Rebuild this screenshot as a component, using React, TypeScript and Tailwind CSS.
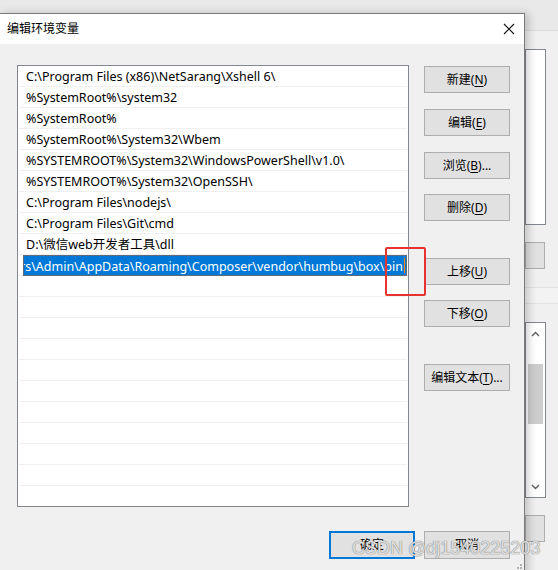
import React from 'react'

const font = { fontFamily: '"Noto Sans", "Noto Sans CJK SC", sans-serif' }

const paths = [
  'C:\\Program Files (x86)\\NetSarang\\Xshell 6\\',
  '%SystemRoot%\\system32',
  '%SystemRoot%',
  '%SystemRoot%\\System32\\Wbem',
  '%SYSTEMROOT%\\System32\\WindowsPowerShell\\v1.0\\',
  '%SYSTEMROOT%\\System32\\OpenSSH\\',
  'C:\\Program Files\\nodejs\\',
  'C:\\Program Files\\Git\\cmd',
  'D:\\微信web开发者工具\\dll',
]

const editing = 'C:\\Users\\Admin\\AppData\\Roaming\\Composer\\vendor\\humbug\\box\\bin'

function Btn({
  label,
  mn,
  tail = '',
  className = '',
}: {
  label: string
  mn: string
  tail?: string
  className?: string
}) {
  return (
    <div
      className={
        'flex h-[27px] w-[86px] items-center justify-center border border-[#adadad] bg-[#e1e1e1] text-[12px] text-black ' +
        className
      }
    >
      <span>
        {label}(<span className="underline underline-offset-2">{mn}</span>){tail}
      </span>
    </div>
  )
}

function Chevron({ up }: { up?: boolean }) {
  return (
    <svg width="9" height="6" viewBox="0 0 9 6">
      <path
        d={up ? 'M1 5L4.5 1.5L8 5' : 'M1 1L4.5 4.5L8 1'}
        fill="none"
        stroke="#606060"
        strokeWidth="1.4"
      />
    </svg>
  )
}

export default function App() {
  const emptyRows = Array.from({ length: 11 })

  return (
    <div className="relative h-[570px] w-[558px] overflow-hidden bg-[#e9e9e9]" style={font}>
      {/* window behind the dialog */}
      <div className="absolute left-[500px] top-[30px] h-[560px] w-[60px] border-t border-[#dcdcdc] bg-[#f0f0f0]">
        <div className="ml-[25px] mt-[18px] h-[176px] w-[21px] border border-[#828790] bg-white" />
        <div className="ml-[25px] mt-[17px] h-[27px] w-[20px] border border-[#adadad] bg-[#e1e1e1]" />
        <div className="mt-[18px] h-[17px] w-[60px] border-y border-[#e2e2e2] bg-[#f3f3f3]" />
        <div className="ml-[25px] mt-[18px] flex h-[176px] w-[21px] flex-col items-center border border-[#828790] bg-white">
          <div className="mt-[8px]">
            <Chevron up />
          </div>
          <div className="mt-[27px] h-[60px] w-[15px] bg-[#cdcdcd]" />
          <div className="mt-auto mb-[7px]">
            <Chevron />
          </div>
        </div>
        <div className="ml-[25px] mt-[17px] h-[27px] w-[20px] border border-[#adadad] bg-[#e1e1e1]" />
      </div>

      {/* dialog */}
      <div className="absolute left-[-1px] top-[13px] h-[600px] w-[526px] border border-[#7a7a7a] bg-[#f0f0f0] shadow-[4px_0_8px_rgba(0,0,0,0.18)]">
        <div className="flex h-[30px] items-center justify-between bg-white pl-[7px] pr-[7px]">
          <span className="text-[12px] text-black">编辑环境变量</span>
          <svg width="12" height="12" viewBox="0 0 12 12" className="mr-[2px]">
            <path d="M1 1L11 11M11 1L1 11" stroke="#111" strokeWidth="1.1" />
          </svg>
        </div>

        <div className="flex pl-[17px] pt-[21px]">
          {/* list */}
          <div className="h-[442px] w-[392px] overflow-hidden border border-[#828790] bg-white">
            {paths.map((p) => (
              <div
                key={p}
                className="mx-[1px] flex h-[21px] items-center border-b border-[#f0f0f0] pl-[7px] pt-[2px] text-[12.5px] whitespace-nowrap text-black"
              >
                {p}
              </div>
            ))}
            <div className="flex h-[21px] items-center border-b border-[#f0f0f0] pl-[5px]">
              <div className="relative flex h-[21px] w-[384px] justify-end overflow-hidden border border-[#5f6b78] bg-[#0078d7]">
                <span className="pr-[3px] pt-[1px] text-[12.5px] leading-[19px] whitespace-nowrap text-white">
                  {editing}
                </span>
                <span className="absolute right-[1px] top-[2px] h-[15px] w-[1px] bg-[#ff8c00]" />
              </div>
            </div>
            {emptyRows.map((_, i) => (
              <div key={i} className="mx-[1px] h-[21px] border-b border-[#f0f0f0]" />
            ))}
          </div>

          {/* side buttons */}
          <div className="ml-[15px] flex flex-col pt-[1px]">
            <Btn label="新建" mn="N" />
            <Btn label="编辑" mn="E" className="mt-[16px]" />
            <Btn label="浏览" mn="B" tail="..." className="mt-[16px]" />
            <Btn label="删除" mn="D" className="mt-[15px]" />
            <Btn label="上移" mn="U" className="mt-[37px]" />
            <Btn label="下移" mn="O" className="mt-[15px]" />
            <Btn label="编辑文本" mn="T" tail="..." className="mt-[37px]" />
          </div>
        </div>

        <div className="mt-[24px] flex justify-end gap-[9px] pr-[14px]">
          <div className="flex h-[28px] w-[86px] items-center justify-center border-2 border-[#0078d7] bg-[#e1e1e1] text-[12px] text-black">
            确定
          </div>
          <div className="flex h-[28px] w-[86px] items-center justify-center border border-[#adadad] bg-[#e1e1e1] text-[12px] text-black">
            取消
          </div>
        </div>
      </div>

      {/* resize grip dots */}
      <div className="absolute left-[517px] top-[564px] grid grid-cols-2 gap-[1px]">
        <span className="h-[2px] w-[2px]" />
        <span className="h-[2px] w-[2px] bg-[#b0b0b0]" />
        <span className="h-[2px] w-[2px] bg-[#b0b0b0]" />
        <span className="h-[2px] w-[2px] bg-[#b0b0b0]" />
      </div>

      {/* red annotation box */}
      <div className="absolute left-[385px] top-[247px] h-[49px] w-[41px] rounded-[2px] border-2 border-[#e8322e]" />

      {/* watermark */}
      <div
        className="absolute left-[352px] top-[535px] text-[18px] whitespace-nowrap text-[#ececec]/90"
        style={{
          fontFamily: '"Liberation Sans", sans-serif',
          textShadow: '0 0 1px #808080, 0 0 1px #808080',
        }}
      >
        CSDN @dj1540225203
      </div>
    </div>
  )
}
